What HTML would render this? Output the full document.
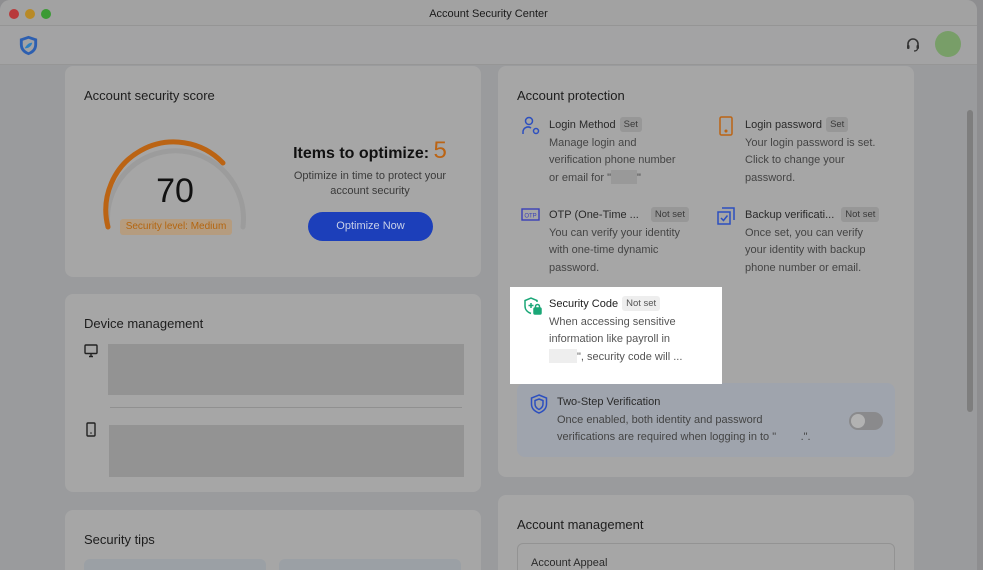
<!DOCTYPE html>
<html><head><meta charset="utf-8"><style>
*{box-sizing:border-box;margin:0;padding:0}
body{width:983px;height:570px;overflow:hidden;font-family:"Liberation Sans",sans-serif;background:#8e8e90}
#wrap{position:absolute;left:0;top:0;width:983px;height:570px;background:#8e8e90;color:#1e1e1e;overflow:hidden}
.win{position:absolute;left:0;top:0;width:977px;height:570px;background:#9a9b9d;border-radius:10px 10px 0 0;overflow:hidden}
.title{position:absolute;left:0;top:0;width:100%;height:26px;background:#a2a2a2;border-bottom:1px solid #959595;text-align:center;font-size:11px;line-height:28px;color:#1a1a1a}
.dot{position:absolute;top:9px;width:10px;height:10px;border-radius:50%}
.tool{position:absolute;left:0;top:26px;width:100%;height:39px;background:#a3a3a4;border-bottom:1px solid #969696}
.card{position:absolute;background:#a6a6a6;border-radius:8px}
.h{position:absolute;font-size:13px;color:#1d1d1d}
.t{position:absolute;font-size:11px;color:#2a2a2a;line-height:17.6px;white-space:nowrap}
.d{color:#444}
.tag{display:inline-block;background:#979797;color:#3a3a3a;font-size:9.5px;padding:0 4px;line-height:15px;border-radius:3px;margin-left:4px;vertical-align:1px}
.ph{position:absolute;background:#939393}
</style></head><body><div id="wrap">
<div class="win">
<div class="title">Account Security Center
<div class="dot" style="left:9px;background:#b8393a"></div>
<div class="dot" style="left:25px;background:#b88a27"></div>
<div class="dot" style="left:41px;background:#3a9a34"></div>
</div>
<div class="tool">
<svg style="position:absolute;left:17px;top:8px" width="23" height="23" viewBox="0 0 24 24"><path d="M12 2 L21 5 V11 C21 17 17 20.5 12 22 C7 20.5 3 17 3 11 V5 Z" fill="#2d5fb0"/><path d="M12 5 L18 7 V11 C18 15 15.5 17.5 12 19 C8.5 17.5 6 15 6 11 V7 Z" fill="#a3a3a4"/><path d="M8 15 C10 11 13 9 16 9 C15 13 12 15 8 15Z" fill="#2d7fc0"/></svg>
<svg style="position:absolute;left:905px;top:11px" width="16" height="16" viewBox="0 0 16 16"><path d="M3 9 V7 a5 5 0 0 1 10 0 V9" fill="none" stroke="#333" stroke-width="1.6"/><rect x="2" y="8" width="2.5" height="4" rx="1" fill="#333"/><rect x="11.5" y="8" width="2.5" height="4" rx="1" fill="#333"/><path d="M12.5 12 Q12 14 9 14" fill="none" stroke="#333" stroke-width="1.3"/></svg>
<div style="position:absolute;left:935px;top:5px;width:26px;height:26px;border-radius:50%;background:#789e68"></div>
</div>

<div class="card" style="left:65px;top:66px;width:416px;height:211px">
<div class="h" style="left:19px;top:22px">Account security score</div>
<svg style="position:absolute;left:36px;top:70px" width="150" height="100" viewBox="0 0 150 100"><path d="M7 91 A68 68 0 1 1 142 91" fill="none" stroke="#9c9c9c" stroke-width="5" stroke-linecap="round"/><path d="M7 91 A68 68 0 0 1 122 27" fill="none" stroke="#bb6414" stroke-width="5" stroke-linecap="round"/></svg>
<div style="position:absolute;left:80px;top:106px;width:60px;text-align:center;font-size:34px;color:#111">70</div>
<div style="position:absolute;left:55px;top:153px;width:112px;height:16px;background:#b59c7f;border-radius:3px;color:#b4650f;font-size:10px;text-align:center;line-height:16px">Security level: Medium</div>
<div style="position:absolute;left:205px;top:71px;width:200px;text-align:center;font-size:16px;font-weight:bold;color:#111">Items to optimize: <span style="color:#bb6414;font-size:24px;font-weight:normal">5</span></div>
<div style="position:absolute;left:215px;top:103px;width:180px;text-align:center;font-size:11px;line-height:15px;color:#3a3a3a">Optimize in time to protect your<br>account security</div>
<div style="position:absolute;left:243px;top:146px;width:125px;height:29px;border-radius:15px;background:#1c3fba;color:#c8d0e8;font-size:11px;text-align:center;line-height:29px">Optimize Now</div>
</div>

<div class="card" style="left:65px;top:294px;width:416px;height:198px">
<div class="h" style="left:19px;top:22px">Device management</div>
<svg style="position:absolute;left:19px;top:50px" width="14" height="14" viewBox="0 0 14 14"><rect x="1" y="1" width="12" height="8.5" rx="1" fill="none" stroke="#222" stroke-width="1.4"/><path d="M5 12.5h4M7 10v2.5" stroke="#222" stroke-width="1.4"/></svg>
<svg style="position:absolute;left:21px;top:128px" width="10" height="15" viewBox="0 0 10 15"><rect x="1" y="1" width="8" height="13" rx="1" fill="none" stroke="#222" stroke-width="1.4"/><circle cx="5" cy="11" r=".8" fill="#222"/></svg>
<div class="ph" style="left:43px;top:50px;width:356px;height:51px"></div>
<div style="position:absolute;left:45px;top:113px;width:352px;height:1px;background:#909090"></div>
<div class="ph" style="left:44px;top:131px;width:355px;height:52px"></div>
</div>

<div class="card" style="left:65px;top:510px;width:416px;height:70px">
<div class="h" style="left:19px;top:22px">Security tips</div>
<div style="position:absolute;left:19px;top:49px;width:182px;height:20px;background:#9ba0a5;border-radius:6px"></div>
<div style="position:absolute;left:214px;top:49px;width:182px;height:20px;background:#9ba0a5;border-radius:6px"></div>
</div>

<div class="card" style="left:498px;top:66px;width:416px;height:411px">
<div class="h" style="left:19px;top:22px">Account protection</div>
<svg style="position:absolute;left:23px;top:50px" width="20" height="20" viewBox="0 0 20 20" fill="none" stroke="#2c4fbf" stroke-width="1.5"><circle cx="8" cy="5" r="3.5"/><path d="M2 18 v-2 a5 5 0 0 1 8-4"/><circle cx="15" cy="15" r="2.5"/></svg>
<div class="t" style="left:51px;top:51px">Login Method<span class="tag">Set</span><br><span class="d">Manage login and<br>verification phone number<br>or email for "<span style="display:inline-block;width:26px;height:14px;background:#999;vertical-align:-3px"></span>"</span></div>
<svg style="position:absolute;left:220px;top:50px" width="16" height="20" viewBox="0 0 16 20" fill="none" stroke="#bb6414" stroke-width="1.5"><rect x="2" y="1" width="12" height="18" rx="1.5"/><circle cx="8" cy="15" r=".8" fill="#bb6414"/></svg>
<div class="t" style="left:247px;top:51px">Login password<span class="tag">Set</span><br><span class="d">Your login password is set.<br>Click to change your<br>password.</span></div>
<svg style="position:absolute;left:23px;top:142px" width="19" height="14" viewBox="0 0 19 14"><rect x="1" y="1" width="17" height="11" fill="none" stroke="#3a3fb8" stroke-width="1.4"/><text x="9.5" y="9.5" font-size="6" text-anchor="middle" fill="#3a3fb8" font-family="Liberation Sans">OTP</text></svg>
<div class="t" style="left:51px;top:141px">OTP (One-Time ...<span class="tag" style="margin-left:12px">Not set</span><br><span class="d">You can verify your identity<br>with one-time dynamic<br>password.</span></div>
<svg style="position:absolute;left:219px;top:141px" width="18" height="18" viewBox="0 0 18 18" fill="none" stroke="#2c4fbf" stroke-width="1.5"><rect x="1" y="5" width="12" height="12"/><path d="M5 1h12v12"/><path d="M4 11l2.5 2.5 4-5"/></svg>
<div class="t" style="left:247px;top:141px">Backup verificati...<span class="tag" style="margin-left:7px">Not set</span><br><span class="d">Once set, you can verify<br>your identity with backup<br>phone number or email.</span></div>
<div style="position:absolute;left:19px;top:317px;width:378px;height:74px;background:#9fa4ad;border-radius:8px"></div>
<svg style="position:absolute;left:32px;top:328px" width="18" height="20" viewBox="0 0 18 20" fill="none" stroke="#2c4fbf" stroke-width="1.5"><path d="M9 1 L16.5 4 V10 C16.5 14.5 13 17.5 9 19 C5 17.5 1.5 14.5 1.5 10 V4 Z"/><path d="M9 5 L13 6.5 V10 C13 12.5 11 14.5 9 15.5 C7 14.5 5 12.5 5 10 V6.5 Z"/></svg>
<div class="t" style="left:59px;top:328px">Two-Step Verification<br><span class="d">Once enabled, both identity and password<br>verifications are required when logging in to "&nbsp;&nbsp;&nbsp;&nbsp;&nbsp;&nbsp;&nbsp;&nbsp;.".</span></div>
<div style="position:absolute;left:351px;top:346px;width:34px;height:18px;border-radius:9px;background:#8a8a8c"><div style="position:absolute;left:2px;top:2px;width:14px;height:14px;border-radius:50%;background:#b2b2b2"></div></div>
</div>

<div class="card" style="left:498px;top:495px;width:416px;height:90px">
<div class="h" style="left:19px;top:22px">Account management</div>
<div style="position:absolute;left:19px;top:48px;width:378px;height:50px;border:1px solid #939393;border-radius:6px"></div>
<div class="t" style="left:33px;top:60px">Account Appeal</div>
</div>

<div style="position:absolute;left:967px;top:110px;width:6px;height:302px;border-radius:3px;background:#7e7e7e"></div>

<div style="position:absolute;left:510px;top:287px;width:212px;height:97px;background:#fff">
<svg style="position:absolute;left:13px;top:9px" width="19" height="20" viewBox="0 0 19 20" fill="none" stroke="#1aa777" stroke-width="1.5"><path d="M14 6 V4.5 L8 2 L2 4.5 V10 C2 14 5 16.5 8 17.5"/><path d="M8 7v5M5.5 9.5h5"/><rect x="11" y="12" width="7" height="6" rx="1" fill="#1aa777"/><path d="M12.5 12v-1.5a2 2 0 0 1 4 0V12"/></svg>
<div class="t" style="left:39px;top:9px;color:#1e1e1e">Security Code<span class="tag" style="background:#eee;color:#555">Not set</span><br><span style="color:#555">When accessing sensitive<br>information like payroll in<br><span style="display:inline-block;width:28px;height:14px;background:#eee;vertical-align:-3px"></span>", security code will ...</span></div>
</div>
</div>
</div></body></html>
